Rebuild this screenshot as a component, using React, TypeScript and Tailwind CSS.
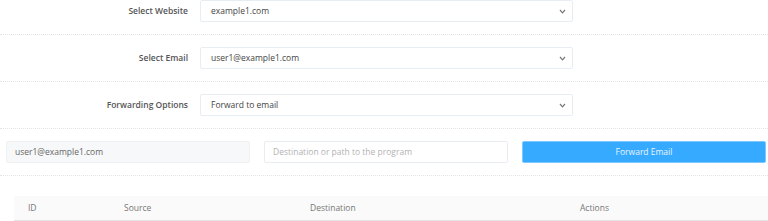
import React from "react";

function Chevron() {
  return (
    <svg width="7" height="5" viewBox="0 0 7 5" className="shrink-0">
      <path d="M1 1 L3.5 3.8 L6 1" fill="none" stroke="#777" strokeWidth="1.2" />
    </svg>
  );
}

function SelectRow({ label, value, first }: { label: string; value: string; first?: boolean }) {
  return (
    <div className={`flex items-center border-b border-dotted border-[#e2e4e7] ${first ? "pb-[12px]" : "py-[12px]"}`}>
      <div className="w-[188px] text-right text-[8.5px] font-semibold text-[#555]">{label}</div>
      <div className="ml-[12px] flex h-[22px] w-[373px] items-center justify-between rounded-[2px] border border-[#e8edf3] bg-white pl-[10px] pr-[6px] text-[8.5px] text-[#444]">
        <span>{value}</span>
        <Chevron />
      </div>
    </div>
  );
}

export default function App() {
  return (
    <div className="h-[221px] w-[768px] overflow-hidden bg-white" style={{ fontFamily: '"Open Sans", "Noto Sans", sans-serif' }}>
      <SelectRow first label="Select Website" value="example1.com" />
      <SelectRow label="Select Email" value="user1@example1.com" />
      <SelectRow label="Forwarding Options" value="Forward to email" />
      <div className="grid grid-cols-3 gap-[14px] border-b border-dotted border-[#e2e4e7] py-[12px] pl-[6px] pr-[2px]">
        <div className="flex h-[22px] items-center rounded-[2px] border border-[#eef0f2] bg-[#f7f8f9] px-[8px] text-[8.5px] text-[#666]">
          user1@example1.com
        </div>
        <div className="flex h-[22px] items-center rounded-[2px] border border-[#e8edf3] bg-white px-[8px] text-[8.5px] text-[#b3b3b3]">
          Destination or path to the program
        </div>
        <div className="flex h-[22px] items-center justify-center rounded-[2px] border border-[#7cc8ff] bg-[#36aaff] text-[8.5px] text-[#e8f5ff]">
          Forward Email
        </div>
      </div>
      <div className="ml-[14px] mt-[20px] flex h-[25px] items-center border-b border-[#e4e4e4] bg-[#fafafa] text-[8.5px] text-[#777]">
        <div className="w-[96px] pl-[14px]">ID</div>
        <div className="w-[186px] pl-[14px]">Source</div>
        <div className="w-[270px] pl-[14px]">Destination</div>
        <div className="flex-1 pl-[14px]">Actions</div>
      </div>
    </div>
  );
}
